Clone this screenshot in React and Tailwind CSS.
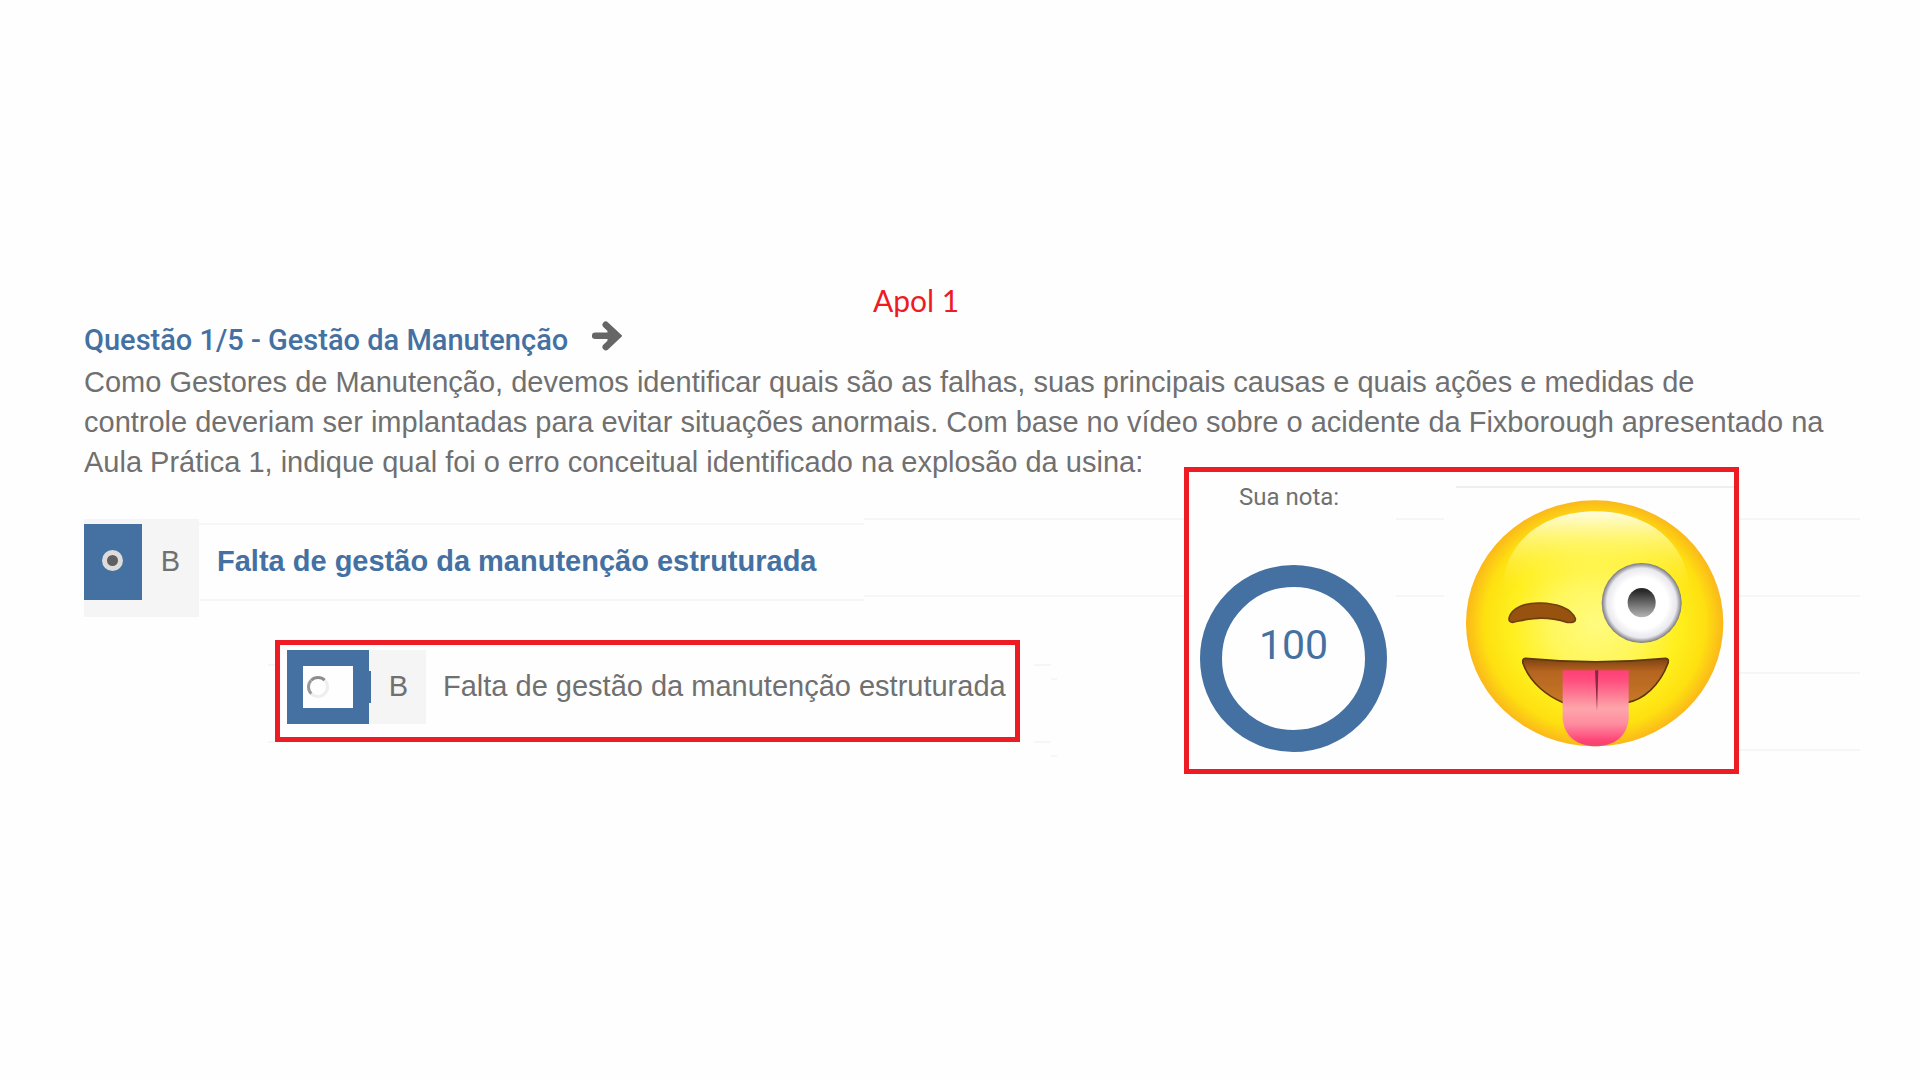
const QUESTION = {
  title: 'Questão 1/5 - Gestão da Manutenção',
  letter: 'B',
  answer: 'Falta de gestão da manutenção estruturada',
  score: 100,
};

export default function App() {
  return (
    <main className="min-h-screen bg-[#fefefe] pt-[280px] pb-20 pl-[84px] pr-[60px] font-['Liberation_Sans',Arial,sans-serif] text-[29px] text-[#707070]">
      <p className="pr-[112px] text-center font-[Lato,sans-serif] text-[30px] leading-[40px] text-[#ed1c24]">Apol 1</p>

      <header className="flex items-center gap-[24px]">
        <h1 className="font-[Roboto,sans-serif] text-[29px] leading-[40px] font-medium text-[#4471a2]">
          {QUESTION.title}
        </h1>
        <svg viewBox="0 0 30 30" className="mb-[8px] size-[30px]" fill="none" stroke="#666" aria-hidden="true">
          <path d="M3 14.8H20" strokeWidth="6.4" strokeLinecap="round" />
          <path d="M13.8 3.8L25.6 14.8L13.8 26" strokeWidth="6.6" strokeLinecap="round" />
          <path d="M16 10L22 15L16 20Z" fill="#666" />
        </svg>
      </header>

      <p className="pt-[2px] leading-[40px]">
        Como Gestores de Manutenção, devemos identificar quais são as falhas, suas principais causas e quais ações e medidas de
        <br />
        controle deveriam ser implantadas para evitar situações anormais. Com base no vídeo sobre o acidente da Fixborough apresentado na
        <br />
        Aula Prática 1, indique qual foi o erro conceitual identificado na explosão da usina:
      </p>

      <section className="flex items-start">
        <div className="w-[780px] shrink-0">
          <SelectedAnswer />
          <MarkedAnswer />
        </div>
        <Rules count={2} className="mt-[36px] min-w-0 flex-1" />
        <ScoreCard />
        <Rules count={4} className="mt-[36px] w-[121px]" />
      </section>
    </main>
  );
}

// Linhas claras da tabela de alternativas
function Rules({ count, className }) {
  return (
    <div className={`flex flex-col gap-[75px] ${className}`}>
      {Array.from({ length: count }, (_, i) => (
        <div key={i} className="h-[2px] bg-[#f6f6f6]" />
      ))}
    </div>
  );
}

// Alternativa escolhida
function SelectedAnswer() {
  return (
    <label className="mt-[37px] flex items-start">
      <span className="flex bg-[#f5f5f5] pt-[5px] pb-[17px]">
        <span className="flex h-[76px] w-[58px] items-center justify-center bg-[#4471a2] pr-[2px] pb-[4px]">
          <input
            type="radio"
            name="escolhida"
            defaultChecked
            className="size-[21px] appearance-none rounded-full border-[5px] border-[#dcdcdc] bg-[#5f5f5f]"
          />
        </span>
        <span className="flex w-[57px] items-center justify-center">{QUESTION.letter}</span>
      </span>
      <span className="mt-[4px] flex h-[78px] flex-1 items-center border-y-2 border-[#f6f6f6] pl-[18px] font-bold text-[#4471a2]">
        {QUESTION.answer}
      </span>
    </label>
  );
}

// Alternativa destacada em vermelho
function MarkedAnswer() {
  return (
    <div className="mt-[23px] ml-[184px] flex items-start">
      <Rules count={2} className="mt-[24px] w-[7px] shrink-0" />
      <label className="flex h-[102px] shrink-0 items-start border-[5px] border-[#ed1c24] pt-[5px] pr-[9px] pl-[7px]">
        <span className="flex h-[74px] w-[82px] items-center justify-center bg-[#4471a2]">
          <span className="flex h-[42px] w-[50px] items-center bg-[#fefefe] pl-[4px]">
            <input
              type="radio"
              name="marcada"
              className="size-[22px] appearance-none rounded-full border-[3px] border-t-[#8c8c8c] border-r-[#eee] border-b-[#eee] border-l-[#9a9a9a]"
            />
          </span>
        </span>
        <span className="flex h-[74px] w-[57px] items-center bg-[#f5f5f5]">
          <span className="h-[32px] w-[2px] bg-[#4471a2]" />
          <span className="flex-1 text-center">{QUESTION.letter}</span>
        </span>
        <span className="flex h-[74px] items-center pl-[17px] whitespace-nowrap">{QUESTION.answer}</span>
      </label>
      <Rules count={2} className="mt-[24px] ml-[14px] w-[17px] shrink-0" />
      <Rules count={2} className="mt-[38px] w-[6px] shrink-0" />
    </div>
  );
}

function ScoreCard() {
  return (
    <div className="-mt-[15px] flex h-[307px] w-[555px] shrink-0 items-start border-[5px] border-[#ed1c24] bg-[#fefefe]">
      <div className="flex w-[207px] flex-col pl-[11px] font-[Roboto,sans-serif]">
        <p className="mt-[9px] pl-[39px] text-[24px] leading-[32px]">Sua nota:</p>
        <div className="mt-[52px] flex size-[187px] items-center justify-center rounded-full border-[22px] border-[#4471a2] pb-[26px] text-[41px] text-[#4471a2]">
          {QUESTION.score}
        </div>
      </div>
      <Rules count={2} className="mt-[46px] w-[48px]" />
      <div className="ml-[12px] flex flex-1 flex-col">
        <div className="mt-[14px] h-[2px] bg-[#eee]" />
        <WinkEmoji />
      </div>
    </div>
  );
}

function WinkEmoji() {
  return (
    <svg viewBox="66 141 792 756" className="mt-[9px] ml-[6px] h-[252px] w-[264px]" aria-hidden="true">
      <defs>
        <radialGradient id="face" cx="0.5" cy="0.5" r="0.5">
          <stop offset="0" stopColor="#fffb80" />
          <stop offset="0.35" stopColor="#fff75c" />
          <stop offset="0.65" stopColor="#ffef1e" />
          <stop offset="0.86" stopColor="#fee010" />
          <stop offset="1" stopColor="#fbb81a" />
        </radialGradient>
        <linearGradient id="shine" x1="0" y1="0" x2="0" y2="1">
          <stop offset="0" stopColor="#fffde0" />
          <stop offset="0.3" stopColor="#fff985" stopOpacity="0.8" />
          <stop offset="0.85" stopColor="#fff23a" stopOpacity="0" />
        </linearGradient>
        <radialGradient id="eye">
          <stop offset="0.65" stopColor="#fff" />
          <stop offset="0.87" stopColor="#e8e8ee" />
          <stop offset="1" stopColor="#77777c" />
        </radialGradient>
        <linearGradient id="pupil" x1="0" y1="0" x2="0" y2="1">
          <stop offset="0.1" stopColor="#292929" />
          <stop offset="1" stopColor="#b5b5b5" />
        </linearGradient>
        <linearGradient id="mouth" x1="0" y1="0" x2="0" y2="1">
          <stop offset="0" stopColor="#7c4112" />
          <stop offset="0.3" stopColor="#b56520" />
          <stop offset="1" stopColor="#c87825" />
        </linearGradient>
        <linearGradient id="tongue" x1="0" y1="0" x2="0" y2="1">
          <stop offset="0" stopColor="#ff3f75" />
          <stop offset="0.15" stopColor="#ff5280" />
          <stop offset="0.5" stopColor="#fda5aa" />
          <stop offset="0.7" stopColor="#fd8da0" />
          <stop offset="0.93" stopColor="#ff4277" />
          <stop offset="1" stopColor="#e94b6b" />
        </linearGradient>
      </defs>
      <ellipse cx="464" cy="520" rx="386" ry="369" fill="url(#face)" />
      <path d="M190 385C215 250 335 184 466 184S720 250 746 390C735 520 610 430 466 430S205 520 190 385Z" fill="url(#shine)" />
      <path
        d="M208 502C216 474 254 458 300 459C350 460 394 474 406 506C408 516 397 519 382 517C348 507 312 502 280 506C250 508 234 515 218 517C210 517 205 512 208 502Z"
        fill="#98520f"
        stroke="#70400c"
        strokeWidth="5"
      />
      <circle cx="605" cy="459" r="120" fill="url(#eye)" />
      <ellipse cx="605" cy="458" rx="42" ry="44" fill="url(#pupil)" />
      <path
        d="M256 625C390 638 545 638 677 625Q688 625 684 640C660 705 610 750 560 758H370C325 740 270 700 249 640Q246 625 256 625Z"
        fill="url(#mouth)"
        stroke="#5e380e"
        strokeWidth="5"
      />
      <path d="M368 661H566V808C560 862 520 889 467 889S374 862 368 808Z" fill="url(#tongue)" />
      <path d="M465 661H475L471 784Z" fill="#862840" />
    </svg>
  );
}
